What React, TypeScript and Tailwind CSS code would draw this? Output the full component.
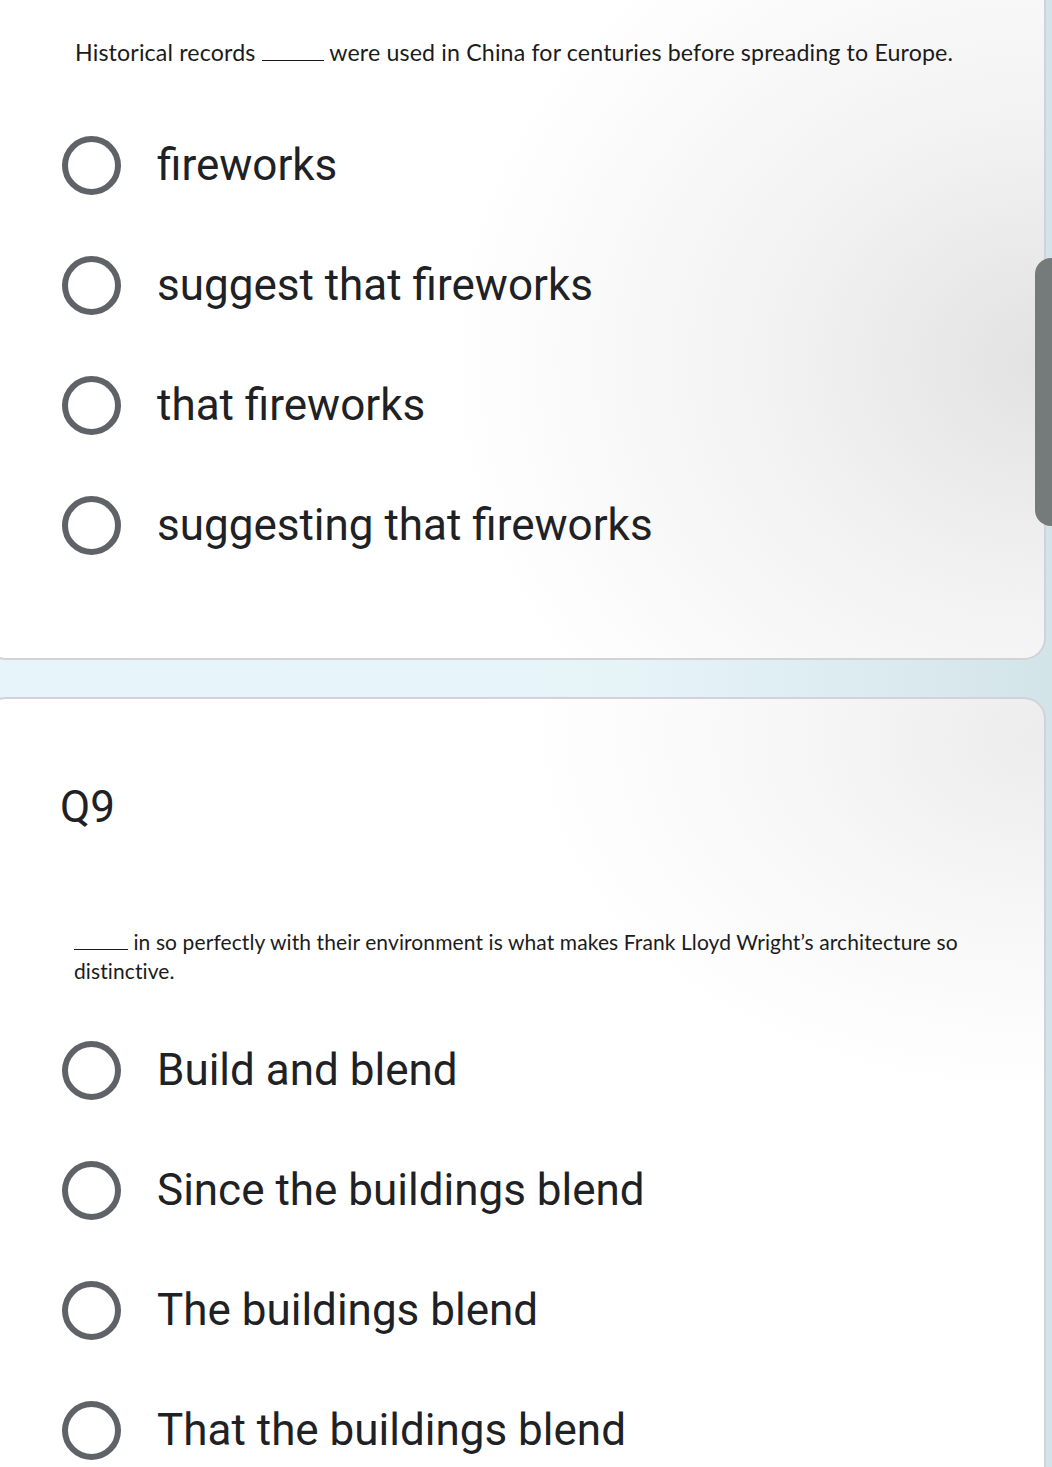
import React from "react";

const Radio = () => (
  <div className="w-[59px] h-[59px] rounded-full border-[6px] border-[#5f6368] shrink-0" />
);

const Option = ({ label }: { label: string }) => (
  <div className="flex items-center h-[120px] pl-[62px]">
    <Radio />
    <span
      className="ml-[36px] text-[44px] leading-[52px] text-[#202124]"
      style={{ fontFamily: "Roboto, sans-serif" }}
    >
      {label}
    </span>
  </div>
);

const calibri = { fontFamily: "Lato, 'Open Sans', sans-serif" };

const Blank = ({ w }: { w: string }) => (
  <span className={`inline-block ${w} h-[1px] bg-[#1b1b1b] align-baseline`} />
);

export default function App() {
  return (
    <div className="relative w-[1052px] h-[1467px] overflow-hidden bg-[linear-gradient(to_right,#e7f5fa_0%,#e6f4f8_60%,#d3e4e9_100%)]">
      {/* Card 1 */}
      <div className="ml-[-16px] w-[1062px] h-[660px] rounded-b-[22px] border-2 border-t-0 border-[#d2d2d8] bg-[radial-gradient(ellipse_600px_520px_at_100%_55%,#e2e2e2_0%,#f2f2f2_45%,#ffffff_100%)]">
        <div className="pl-[14px] pt-[37px]">
          <p className="pl-[75px] text-[23.2px] leading-[30px] text-[#1b1b1b] tracking-[0.15px] whitespace-nowrap" style={calibri}>
            Historical records <Blank w="w-[62px]" /> were used in China for centuries before spreading to Europe.
          </p>
          <div className="mt-[38px]">
            <Option label="fireworks" />
            <Option label="suggest that fireworks" />
            <Option label="that fireworks" />
            <Option label="suggesting that fireworks" />
          </div>
        </div>
      </div>

      {/* Card 2 */}
      <div className="mt-[37px] ml-[-16px] w-[1062px] h-[780px] rounded-t-[22px] border-2 border-b-0 border-[#d2d2d8] bg-[radial-gradient(ellipse_520px_360px_at_100%_5%,#ececec_0%,#f7f7f7_50%,#ffffff_100%)]">
        <div className="pl-[14px] pt-[82px]">
          <div
            className="pl-[60px] text-[44px] leading-[52px] text-[#202124]"
            style={{ fontFamily: "Roboto, sans-serif" }}
          >
            Q9
          </div>
          <p className="mt-[94px] pl-[74px] w-[990px] text-[21px] leading-[29px] text-[#1b1b1b] tracking-[0.1px]" style={calibri}>
            <Blank w="w-[54px]" /> in so perfectly with their environment is what makes Frank Lloyd Wright’s architecture so distinctive.
          </p>
          <div className="mt-[25px]">
            <Option label="Build and blend" />
            <Option label="Since the buildings blend" />
            <Option label="The buildings blend" />
            <Option label="That the buildings blend" />
          </div>
        </div>
      </div>

      {/* scrollbar thumb */}
      <div className="absolute right-0 top-[258px] w-[17px] h-[268px] rounded-l-[16px] bg-[#757b7a]" />
    </div>
  );
}
